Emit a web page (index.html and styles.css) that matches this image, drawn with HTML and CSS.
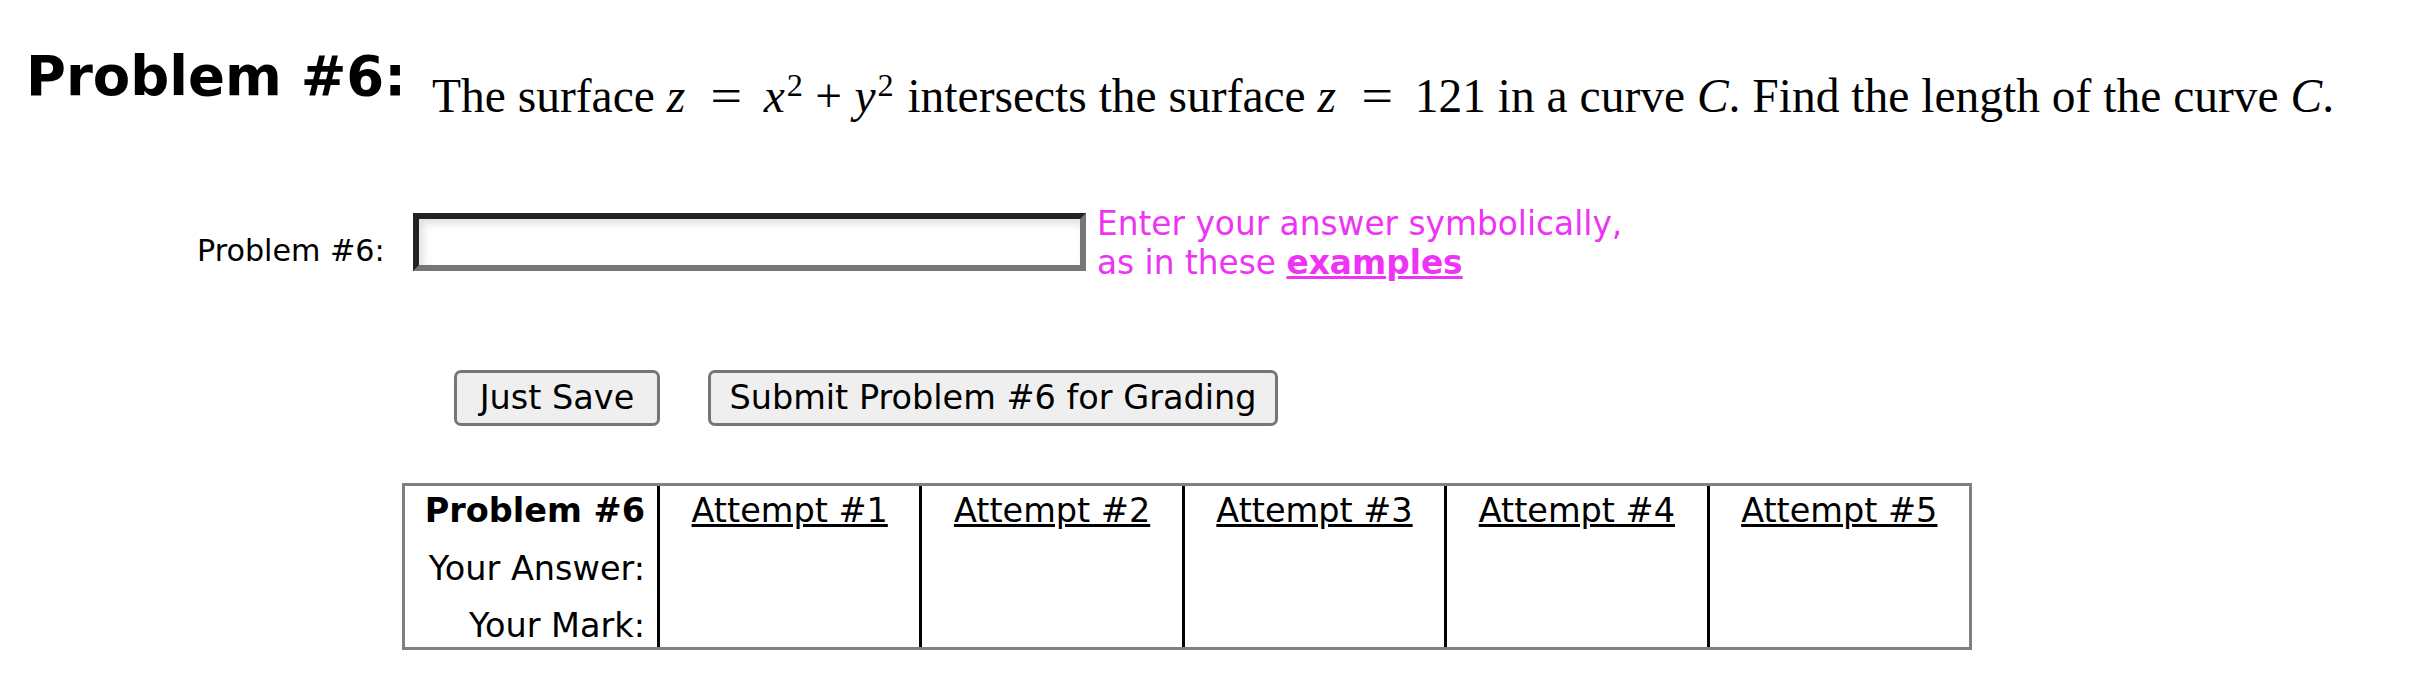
FILE: index.html
```html
<!DOCTYPE html>
<html lang="en">
<head>
<meta charset="utf-8">
<title>Problem #6</title>
<link rel="stylesheet" href="styles.css">
</head>
<body>
<div class="page">
  <div class="problem-head">
    <h1 class="problem-title">Problem #6:</h1>
    <p class="problem-text">The surface <i class="mv">z</i><span class="eq">=</span><i class="mv">x</i><sup>2</sup><span class="op">+</span><i class="mv">y</i><sup class="last">2</sup> intersects the surface <i class="mv">z</i><span class="eq">=</span><span class="num">121</span> in a curve <i>C</i>. Find the length of the curve <i>C</i>.</p>
  </div>

  <div class="answer-row">
    <label class="answer-label" for="ans6">Problem #6:</label>
    <input class="answer-input" id="ans6" type="text">
    <div class="answer-hint">Enter your answer symbolically,<br>as in these <a href="#" class="hint-link">examples</a></div>
  </div>

  <div class="button-row">
    <button class="btn btn-save" type="button">Just Save</button>
    <button class="btn btn-submit" type="button">Submit Problem #6 for Grading</button>
  </div>

  <table class="attempts">
    <tr class="row-head">
      <th class="row-label">Problem #6</th>
      <td class="attempt"><a href="#">Attempt #1</a></td>
      <td class="attempt"><a href="#">Attempt #2</a></td>
      <td class="attempt"><a href="#">Attempt #3</a></td>
      <td class="attempt"><a href="#">Attempt #4</a></td>
      <td class="attempt"><a href="#">Attempt #5</a></td>
    </tr>
    <tr class="row-answer">
      <td class="row-label plain">Your Answer:</td>
      <td class="attempt"></td>
      <td class="attempt"></td>
      <td class="attempt"></td>
      <td class="attempt"></td>
      <td class="attempt"></td>
    </tr>
    <tr class="row-mark">
      <td class="row-label plain">Your Mark:</td>
      <td class="attempt"></td>
      <td class="attempt"></td>
      <td class="attempt"></td>
      <td class="attempt"></td>
      <td class="attempt"></td>
    </tr>
  </table>
</div>
</body>
</html>
```

FILE: styles.css
```css
html, body {
  margin: 0;
  padding: 0;
  background: #ffffff;
}

body {
  font-family: "DejaVu Sans", Verdana, sans-serif;
  color: #000000;
}

.page {
  padding: 44px 0 40px 0;
}

/* ---------- heading + statement ---------- */
.problem-head {
  display: flex;
  align-items: flex-start;
  padding-left: 26px;
}

.problem-title {
  flex: none;
  width: 406px;
  margin: 0;
  font-family: "DejaVu Sans", Verdana, sans-serif;
  font-weight: bold;
  font-size: 54.5px;
  line-height: 64px;
  white-space: nowrap;
}

.problem-text {
  margin: 26px 0 0 0;
  font-family: "Liberation Serif", "Times New Roman", serif;
  font-size: 47.5px;
  line-height: 52px;
  white-space: nowrap;
}

.problem-text i {
  font-style: italic;
}

.problem-text .mv {
  padding-right: 0.04em;
}

.problem-text sup {
  font-size: 0.68em;
  line-height: 0;
  vertical-align: 0.5em;
}

.problem-text sup.last {
  margin-right: 2px;
}

.problem-text .eq {
  display: inline-block;
  margin: 0 0.5em 0 0.55em;
  transform: scaleX(1.18);
}

.problem-text .op {
  margin: 0 0.26em;
}

/* ---------- answer row ---------- */
.answer-row {
  display: flex;
  align-items: flex-start;
  margin-top: 83px;
  padding-left: 197px;
}

.answer-label {
  flex: none;
  width: 216px;
  margin-top: 28px;
  font-size: 30.2px;
  line-height: 35px;
  white-space: nowrap;
}

.answer-input {
  flex: none;
  box-sizing: border-box;
  width: 673px;
  height: 58px;
  margin: 8px 0 0 0;
  padding: 0 8px;
  border-style: solid;
  border-width: 6px;
  border-color: #222222 #767676 #767676 #222222;
  background: #ffffff;
  box-shadow: inset 4px 5px 9px rgba(0, 0, 0, 0.12);
  font-family: "DejaVu Sans", Verdana, sans-serif;
  font-size: 29px;
  outline: none;
}

.answer-hint {
  margin-left: 11px;
  color: #ee33f5;
  font-size: 32.8px;
  line-height: 39px;
  white-space: nowrap;
}

.hint-link {
  color: #ee33f5;
  font-weight: bold;
  text-decoration: underline;
}

/* ---------- buttons ---------- */
.button-row {
  display: flex;
  gap: 48px;
  margin-top: 87px;
  padding-left: 454px;
}

.btn {
  box-sizing: border-box;
  height: 56px;
  padding: 0;
  border: 3px solid #767676;
  border-radius: 7px;
  background: #efefef;
  color: #000000;
  font-family: "DejaVu Sans", Verdana, sans-serif;
  font-size: 33.5px;
  line-height: 48px;
  text-align: center;
  white-space: nowrap;
}

.btn-save {
  width: 206px;
}

.btn-submit {
  width: 570px;
}

/* ---------- attempts table ---------- */
.attempts {
  margin: 57px 0 0 402px;
  width: 1570px;
  table-layout: fixed;
  border-collapse: separate;
  border-spacing: 0;
  border: 3px solid #808080;
  font-size: 33.5px;
}

.attempts th,
.attempts td {
  box-sizing: border-box;
  padding: 5px 12px 0 8px;
  vertical-align: top;
  line-height: 39px;
  white-space: nowrap;
}

.row-label {
  width: 252px;
  text-align: right;
}

.row-label.plain {
  font-weight: normal;
}

th.row-label {
  font-weight: bold;
}

.attempt {
  border-left: 3px solid #000000;
  text-align: center;
  padding-left: 0 !important;
  padding-right: 0 !important;
}

.attempt a {
  color: #000000;
  text-decoration: underline;
}

.row-head {
  height: 58px;
}

.row-answer {
  height: 57px;
}

.row-mark {
  height: 46px;
}
```
